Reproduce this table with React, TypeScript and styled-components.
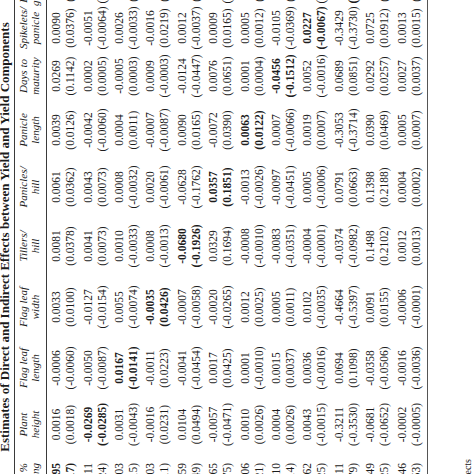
import styled, { createGlobalStyle } from 'styled-components';

const GlobalStyle = createGlobalStyle`
  html, body {
    margin: 0;
    padding: 0;
    background: #fff;
  }
`;

// label, first (cut) trait, then the eight visible traits, then the next (cut) one
const columns = '90px 50px 53px 60px 62px 60px 58px 56px 52px 44px 48px';

const Frame = styled.div`
  width: 474px;
  height: 474px;
  overflow: hidden;
  background: #fff;
`;

const Sheet = styled.div`
  width: 474px;
  height: 474px;
  overflow: hidden;
  transform: rotate(-90deg);
  display: flex;
  flex-direction: column;
  font-family: 'Liberation Serif', 'Times New Roman', serif;
  color: #1c1c1c;
  background: #fff;
`;

const Title = styled.h1`
  margin: -2px 0 0;
  height: 17px;
  font-size: 13px;
  line-height: 14px;
  font-weight: bold;
  text-align: center;
  white-space: nowrap;
`;

const Table = styled.div`
  margin-left: -117px;
  width: 633px;
  border-top: 1.5px solid #3a3a3a;
`;

const HeaderRow = styled.div`
  display: grid;
  grid-template-columns: ${columns};
  padding: 2.5px 0 4.5px;
  border-bottom: 1px solid #3a3a3a;
`;

const Body = styled.div`
  padding-bottom: 3.5px;
  border-bottom: 1px solid #555;
`;

const DataRow = styled.div`
  display: grid;
  grid-template-columns: ${columns};
  height: 31.4px;
  padding-top: 2.5px;
  box-sizing: border-box;
`;

const Cell = styled.div<{ $align?: 'left' | 'center' | 'right'; $bold?: boolean }>`
  display: flex;
  flex-direction: column;
  align-items: ${(p) =>
    p.$align === 'left' ? 'flex-start' : p.$align === 'right' ? 'flex-end' : 'center'};
  padding: ${(p) => (p.$align === 'right' ? '0 12px 0 0' : p.$align === 'left' ? '0 0 0 4px' : '0')};
  font-size: 11.5px;
  line-height: 14px;
  font-weight: ${(p) => (p.$bold ? 'bold' : 'normal')};
  white-space: nowrap;
`;

const HeadCell = styled(Cell)`
  font-size: 11px;
  line-height: 12px;
  font-style: italic;
`;

const NoteRow = styled.div`
  display: grid;
  grid-template-columns: ${columns};
  margin-top: 34px;
`;

const Note = styled.div`
  grid-column: 1 / 3;
  padding-right: 8px;
  text-align: right;
  font-size: 10px;
  line-height: 12px;
  white-space: nowrap;
`;

const headers: [string, string][] = [
  ['Ripening %', 'filling'],
  ['Plant', 'height'],
  ['Flag leaf', 'length'],
  ['Flag leaf', 'width'],
  ['Tillers/', 'hill'],
  ['Panicles/', 'hill'],
  ['Panicle', 'length'],
  ['Days to', 'maturity'],
  ['Spikelets/', 'panicle'],
  ['Effective/', 'grain ratio']
];

type Pair = [string, string];

const rows: { label: string; values: Pair[] }[] = [
  {
    label: 'Ripening %',
    values: [
      ['0.0395', '(0.0417)'], ['0.0016', '(0.0018)'], ['-0.0006', '(-0.0060)'],
      ['0.0033', '(0.0100)'], ['0.0081', '(0.0378)'], ['0.0061', '(0.0362)'],
      ['0.0039', '(0.0126)'], ['0.0269', '(0.1142)'], ['0.0090', '(0.0376)'],
      ['0.0118', '(0.0513)']
    ]
  },
  {
    label: 'Plant height',
    values: [
      ['-0.0011', '(-0.0124)'], ['-0.0269', '(-0.0285)'], ['-0.0050', '(-0.0087)'],
      ['-0.0127', '(-0.0154)'], ['0.0041', '(0.0073)'], ['0.0043', '(0.0073)'],
      ['-0.0042', '(-0.0060)'], ['0.0002', '(0.0005)'], ['-0.0051', '(-0.0064)'],
      ['-0.0023', '(-0.0061)']
    ]
  },
  {
    label: 'Flag leaf length',
    values: [
      ['0.0003', '(0.0015)'], ['0.0031', '(-0.0043)'], ['0.0167', '(-0.0141)'],
      ['0.0055', '(-0.0074)'], ['0.0010', '(-0.0033)'], ['0.0008', '(-0.0032)'],
      ['0.0004', '(0.0011)'], ['-0.0005', '(0.0003)'], ['0.0026', '(-0.0033)'],
      ['0.0012', '(0.0034)']
    ]
  },
  {
    label: 'Flag leaf width',
    values: [
      ['-0.0003', '(0.0211)'], ['-0.0016', '(0.0231)'], ['-0.0011', '(0.0223)'],
      ['-0.0035', '(0.0426)'], ['0.0008', '(-0.0013)'], ['0.0020', '(-0.0061)'],
      ['-0.0007', '(-0.0087)'], ['0.0009', '(-0.0003)'], ['-0.0016', '(0.0219)'],
      ['-0.0009', '(0.0152)']
    ]
  },
  {
    label: 'Tillers/hill',
    values: [
      ['0.0059', '(0.0349)'], ['0.0104', '(0.0494)'], ['-0.0041', '(-0.0454)'],
      ['-0.0007', '(-0.0058)'], ['-0.0680', '(-0.1926)'], ['-0.0628', '(-0.1762)'],
      ['0.0090', '(0.0165)'], ['-0.0124', '(-0.0447)'], ['0.0012', '(-0.0037)'],
      ['0.0046', '(0.0288)']
    ]
  },
  {
    label: 'Panicles/hill',
    values: [
      ['-0.0065', '(-0.0375)'], ['-0.0057', '(-0.0471)'], ['0.0017', '(0.0425)'],
      ['-0.0020', '(-0.0265)'], ['0.0329', '(0.1694)'], ['0.0357', '(0.1851)'],
      ['-0.0072', '(0.0390)'], ['0.0076', '(0.0651)'], ['0.0009', '(0.0165)'],
      ['-0.0031', '(-0.0207)']
    ]
  },
  {
    label: 'Panicle length',
    values: [
      ['0.0006', '(0.0021)'], ['0.0010', '(0.0026)'], ['0.0001', '(-0.0010)'],
      ['0.0012', '(0.0025)'], ['-0.0008', '(-0.0010)'], ['-0.0013', '(-0.0026)'],
      ['0.0063', '(0.0122)'], ['0.0001', '(0.0004)'], ['0.0005', '(0.0012)'],
      ['0.0004', '(0.0009)']
    ]
  },
  {
    label: 'Days to maturity',
    values: [
      ['0.0010', '(0.0014)'], ['0.0004', '(0.0026)'], ['0.0015', '(0.0037)'],
      ['0.0005', '(0.0011)'], ['-0.0083', '(-0.0351)'], ['-0.0097', '(-0.0451)'],
      ['0.0007', '(-0.0066)'], ['-0.0456', '(-0.1512)'], ['-0.0105', '(-0.0369)'],
      ['0.0011', '(0.0043)']
    ]
  },
  {
    label: 'Spikelets/panicle',
    values: [
      ['0.0062', '(-0.0025)'], ['0.0043', '(-0.0015)'], ['0.0036', '(-0.0016)'],
      ['0.0102', '(-0.0035)'], ['-0.0004', '(-0.0001)'], ['0.0005', '(-0.0006)'],
      ['0.0019', '(0.0007)'], ['0.0052', '(-0.0016)'], ['0.0227', '(-0.0067)'],
      ['0.0027', '(-0.0019)']
    ]
  },
  {
    label: 'Effective tillers',
    values: [
      ['-0.1011', '(-0.1179)'], ['-0.3211', '(-0.3530)'], ['0.0694', '(0.1098)'],
      ['-0.4664', '(-0.5397)'], ['-0.0374', '(-0.0982)'], ['0.0791', '(0.0663)'],
      ['-0.3053', '(-0.3714)'], ['0.0689', '(0.0851)'], ['-0.3429', '(-0.3730)'],
      ['-0.4217', '(-0.4602)']
    ]
  },
  {
    label: 'Grain weight',
    values: [
      ['0.0249', '(0.0325)'], ['-0.0681', '(-0.0652)'], ['-0.0358', '(-0.0506)'],
      ['0.0091', '(0.0155)'], ['0.1498', '(0.2102)'], ['0.1398', '(0.2188)'],
      ['0.0390', '(0.0469)'], ['0.0292', '(0.0257)'], ['0.0725', '(0.0912)'],
      ['0.0538', '(0.0814)']
    ]
  },
  {
    label: 'Harvest index',
    values: [
      ['-0.0046', '(-0.0053)'], ['-0.0002', '(-0.0005)'], ['-0.0016', '(-0.0036)'],
      ['-0.0006', '(-0.0001)'], ['0.0012', '(0.0013)'], ['0.0004', '(0.0002)'],
      ['0.0005', '(0.0007)'], ['0.0027', '(0.0037)'], ['0.0013', '(0.0015)'],
      ['0.0008', '(0.0010)']
    ]
  }
];

export default function App() {
  return (
    <>
      <GlobalStyle />
      <Frame>
        <Sheet>
          <Title>
            Estimates of Direct and Indirect Effects between Yield and Yield Components
          </Title>
          <Table>
            <HeaderRow>
              <HeadCell $align="left">
                <span>Traits</span>
              </HeadCell>
              {headers.map(([top, bottom], i) => (
                <HeadCell key={top + bottom} $align={i === 0 ? 'right' : 'center'}>
                  <span>{top}</span>
                  <span>{bottom}</span>
                </HeadCell>
              ))}
            </HeaderRow>
            <Body>
              {rows.map((row, r) => (
                <DataRow key={row.label}>
                  <Cell $align="left">
                    <span>{row.label}</span>
                  </Cell>
                  {row.values.map(([value, indirect], c) => (
                    <Cell key={c} $align={c === 0 ? 'right' : 'center'} $bold={c === r}>
                      <span>{value}</span>
                      <span>{indirect}</span>
                    </Cell>
                  ))}
                </DataRow>
              ))}
            </Body>
            <NoteRow>
              <Note>Bold figures are direct effects</Note>
            </NoteRow>
          </Table>
        </Sheet>
      </Frame>
    </>
  );
}
